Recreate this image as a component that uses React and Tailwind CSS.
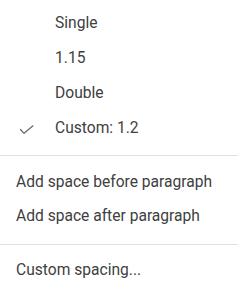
export default function App() {
  const group1 = ["Single", "1.15", "Double", "Custom: 1.2"];
  return (
    <div
      className="w-[238px] h-[296px] bg-white text-[15.6px] text-[#404040] overflow-hidden"
      style={{ fontFamily: "Roboto, 'Liberation Sans', sans-serif" }}
    >
      <div className="pt-[6.5px]">
        {group1.map((t, i) => (
          <div key={t} className="relative h-[35px] flex items-center pl-[55px]">
            {i === 3 && (
              <svg
                className="absolute left-[18px] top-[13.5px]"
                width="18"
                height="12"
                viewBox="0 0 18 12"
                fill="none"
              >
                <path
                  d="M2.5 4.5 L6 8.3 L15 0.8"
                  stroke="#666"
                  strokeWidth="1.2"
                  strokeLinecap="round"
                  strokeLinejoin="round"
                />
              </svg>
            )}
            <span>{t}</span>
          </div>
        ))}
      </div>
      <div className="mt-[8.5px] mb-[10px] h-px bg-[#e0e0e0]" />
      <div>
        <div className="h-[34px] flex items-center pl-[16px]">Add space before paragraph</div>
        <div className="h-[34px] flex items-center pl-[16px]">Add space after paragraph</div>
      </div>
      <div className="mt-[10px] mb-[9px] h-px bg-[#e0e0e0]" />
      <div className="h-[34px] flex items-center pl-[16px]">Custom spacing...</div>
    </div>
  );
}
